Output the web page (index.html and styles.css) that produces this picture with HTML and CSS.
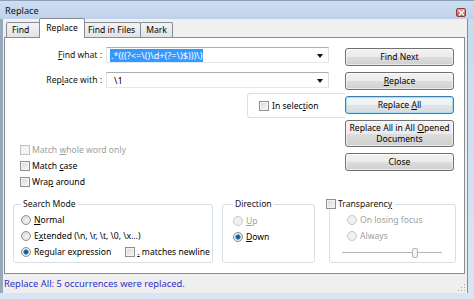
FILE: index.html
```html
<!DOCTYPE html>
<html lang="en">
<head>
  <meta charset="UTF-8" />
  <title>Replace</title>
  <link rel="stylesheet" href="styles.css">
</head>
<body>
  <div class="window">
    <div class="titlebar">
      <span class="title">Replace</span>
      <span class="close">
        <svg width="7" height="6" viewBox="0 0 7 6"><path d="M1 0.5 L6 5.5 M6 0.5 L1 5.5" stroke="#fff" stroke-width="1.4"/></svg>
      </span>
    </div>

    <div class="client">
      <div class="tabs">
        <div class="tab first">Find</div>
        <div class="tab active">Replace</div>
        <div class="tab">Find in Files</div>
        <div class="tab">Mark</div>
      </div>

      <div class="panel">
        <div class="top">
          <div class="form">
            <div class="field">
              <label><u>F</u>ind what :</label>
              <div class="combo"><span class="sel">.*(((?&lt;=\()\d+(?=\)$)))\)</span><span class="arrow"></span></div>
            </div>
            <div class="field">
              <label>Rep<u>l</u>ace with :</label>
              <div class="combo"><span class="val">\1</span><span class="arrow"></span></div>
            </div>
            <div class="insel">
              <span class="cb"></span><span>In selec<u>t</u>ion</span>
            </div>
            <div class="checks">
              <div class="row disabled"><span class="cb"></span><span>Match <u>w</u>hole word only</span></div>
              <div class="row"><span class="cb"></span><span>Match <u>c</u>ase</span></div>
              <div class="row"><span class="cb"></span><span>Wra<u>p</u> around</span></div>
            </div>
          </div>

          <div class="buttons">
            <div class="btn"><span>Find Next</span></div>
            <div class="btn"><span><u>R</u>eplace</span></div>
            <div class="btn focused"><span>Replace <u>A</u>ll</span></div>
            <div class="btn tall"><span>Replace All in All <u>O</u>pened<br>Documents</span></div>
            <div class="btn"><span>Close</span></div>
          </div>
        </div>

        <div class="groups">
          <fieldset class="group search">
            <legend>Search Mode</legend>
            <div class="row"><span class="radio"></span><span><u>N</u>ormal</span></div>
            <div class="row"><span class="radio"></span><span>E<u>x</u>tended (\n, \r, \t, \0, \x...)</span></div>
            <div class="row">
              <span class="radio on"></span><span>Regular expression</span>
              <span class="cb newline"></span><span><u>.</u> matches newline</span>
            </div>
          </fieldset>

          <fieldset class="group direction">
            <legend>Direction</legend>
            <div class="row disabled"><span class="radio"></span><span><u>U</u>p</span></div>
            <div class="row"><span class="radio on"></span><span><u>D</u>own</span></div>
          </fieldset>

          <fieldset class="group transparency">
            <legend><span class="cb"></span><span>Transparenc<u>y</u></span></legend>
            <div class="row disabled"><span class="radio"></span><span>On losing focus</span></div>
            <div class="row disabled"><span class="radio"></span><span>Always</span></div>
            <div class="slider"><span class="thumb"></span></div>
          </fieldset>
        </div>
      </div>

      <div class="status">
        <span>Replace All: 5 occurrences were replaced.</span>
        <svg class="grip" width="8" height="8" viewBox="0 0 8 8">
          <rect x="6" y="0" width="1" height="1" fill="#a8a8a8"/>
          <rect x="3" y="3" width="1" height="1" fill="#a8a8a8"/>
          <rect x="6" y="3" width="1" height="1" fill="#a8a8a8"/>
          <rect x="0" y="6" width="1" height="1" fill="#a8a8a8"/>
          <rect x="3" y="6" width="1" height="1" fill="#a8a8a8"/>
          <rect x="6" y="6" width="1" height="1" fill="#a8a8a8"/>
        </svg>
      </div>
    </div>
  </div>
</body>
</html>
```

FILE: styles.css
```css
body {
  margin: 0;
  font-family: "Noto Sans", "Open Sans", sans-serif;
  font-size: 8.6px;
  color: #000;
}
u {
  text-decoration: underline;
  text-underline-offset: 1px;
}
.window {
  width: 474px;
  height: 299px;
  display: flex;
  flex-direction: column;
  background: linear-gradient(#c9daee, #d8e5f3);
  overflow: hidden;
}
.titlebar {
  height: 19px;
  flex: none;
  display: flex;
  align-items: center;
  justify-content: space-between;
  padding: 0 8px 0 5px;
  border-top: 1px solid #8aa0b8;
  box-sizing: border-box;
  background: linear-gradient(#cfdff1, #bdd2ea);
}
.title {
  font-size: 9.2px;
  color: #111;
}
.close {
  width: 10px;
  height: 9px;
  box-sizing: border-box;
  margin-top: 5px;
  border: 1px solid #8a3b3b;
  border-radius: 2px;
  background: linear-gradient(#e6a8a0, #c55a4e);
  display: flex;
  align-items: center;
  justify-content: center;
}
.client {
  flex: 1;
  margin: 0 6px 6px 0;
  border-left: 3px solid #97a8ba;
  border-right: 1px solid #4b9be0;
  background: #f0f0f0;
  display: flex;
  flex-direction: column;
}
.tabs {
  height: 18px;
  display: flex;
  align-items: flex-end;
  padding-left: 3px;
  position: relative;
  z-index: 1;
}
.tab {
  height: 15px;
  padding: 0 5px;
  margin-left: -1px;
  border: 1px solid #898c95;
  border-bottom: none;
  border-radius: 2px 2px 0 0;
  background: linear-gradient(#f3f3f3, #e3e3e3);
  display: flex;
  align-items: center;
  box-sizing: border-box;
}
.tab.first {
  width: 35px;
  margin-left: 0;
}
.tab.active {
  width: 46px;
  margin: 0 -2px -1px -2px;
  height: 20px;
  padding-bottom: 2px;
  background: #fff;
  justify-content: center;
  position: relative;
  z-index: 2;
}
.panel {
  margin: 0 2px 0 1px;
  height: 237px;
  box-sizing: border-box;
  border: 1px solid #898c95;
  background: #fff;
  display: flex;
  flex-direction: column;
}
.top {
  display: flex;
}
.form {
  width: 335px;
}
.field {
  display: flex;
  align-items: center;
  height: 16px;
  margin-top: 9px;
}
.field label {
  width: 101px;
  text-align: right;
  padding-right: 4px;
  box-sizing: border-box;
  color: #111;
}
.combo {
  width: 223px;
  height: 16px;
  box-sizing: border-box;
  border: 1px solid #abadb3;
  border-color: #abadb3 #dbdfe6 #e3e9ef #e2e3ea;
  display: flex;
  align-items: center;
  padding-left: 3px;
  position: relative;
  font-size: 9.2px;
}
.sel {
  background: #3399ff;
  color: #fff;
  padding: 0 1px;
  line-height: 13px;
}
.val {
  padding-left: 4px;
}
.arrow {
  position: absolute;
  right: 5px;
  top: 6px;
  border-top: 4px solid #111;
  border-left: 3px solid transparent;
  border-right: 3px solid transparent;
}
.insel {
  margin: 5px 0 0 242px;
  width: 98px;
  height: 25px;
  box-sizing: border-box;
  border: 1px solid #dcdfe3;
  border-right: none;
  border-radius: 3px 0 0 3px;
  display: flex;
  align-items: center;
  padding-left: 11px;
  gap: 3px;
}
.cb {
  width: 10px;
  height: 10px;
  box-sizing: border-box;
  border: 1px solid #8e8f8f;
  background: linear-gradient(135deg, #d8d8d8, #f7f7f7);
  box-shadow: inset 0 0 0 1px #f4f4f4;
  flex: none;
}
.checks {
  margin-top: 24px;
  padding-left: 15px;
}
.row {
  height: 16px;
  display: flex;
  align-items: center;
  gap: 2px;
}
.disabled {
  color: #a0a0a0;
}
.disabled .cb {
  border-color: #c2c2c2;
  background: #f4f4f4;
}
.buttons {
  margin: 10px 0 0 5px;
  width: 109px;
  display: flex;
  flex-direction: column;
  gap: 6px;
}
.btn {
  height: 18px;
  box-sizing: border-box;
  border: 1px solid #707070;
  border-radius: 3px;
  background: linear-gradient(#f2f2f2 0%, #ebebeb 50%, #dddddd 51%, #cfcfcf 100%);
  box-shadow: inset 0 0 0 1px rgba(255, 255, 255, 0.6);
  display: flex;
  align-items: center;
  justify-content: center;
  text-align: center;
  line-height: 11px;
}
.btn.tall {
  height: 27px;
}
.btn.focused {
  border-color: #3c7fb1;
  box-shadow: inset 0 0 0 1px #a6dcf6;
  background: linear-gradient(#f4f7f9 0%, #eef1f3 50%, #e1e5e8 51%, #d7dbde 100%);
}
.groups {
  display: flex;
  align-items: flex-start;
  margin-top: 8px;
  padding-left: 8px;
}
.group {
  margin: 0;
  padding: 0 0 0 7px;
  border: 1px solid #d5dfe5;
  border-radius: 3px;
  box-sizing: border-box;
  height: 65px;
  min-width: 0;
}
.group legend {
  padding: 0 2px;
  line-height: 12px;
  color: #111;
}
.group .row {
  gap: 3px;
}
.search {
  width: 200px;
}
.search .row:first-of-type {
  margin-top: 2px;
}
.cb.newline {
  margin-left: 11px;
  margin-right: -1px;
}
.direction {
  width: 93px;
  margin-left: 9px;
  padding-left: 10px;
}
.direction .row:first-of-type {
  margin-top: 3px;
}
.transparency {
  width: 127px;
  margin-left: 14px;
  padding-left: 17px;
}
.transparency legend {
  display: flex;
  align-items: center;
  gap: 2px;
  padding: 0 3px 0 0;
  margin-left: -21px;
  background: #fff;
}
.transparency .row:first-of-type {
  margin-top: 2px;
}
.radio {
  width: 10px;
  height: 10px;
  box-sizing: border-box;
  border-radius: 50%;
  border: 1px solid #8e8f8f;
  background: radial-gradient(circle at 60% 65%, #f4f4f4, #d2d2d2);
  flex: none;
}
.radio.on {
  background: radial-gradient(circle, #0e3e6e 0, #2b79c2 2.2px, #e7eef5 3px, #dadada 100%);
}
.disabled .radio {
  border-color: #c8c8c8;
  background: #f0f0f0;
}
.slider {
  margin: 8px 0 0 -5px;
  width: 100px;
  height: 2px;
  border-top: 1px solid #b5b5b5;
  border-bottom: 1px solid #fff;
  box-sizing: border-box;
  position: relative;
}
.thumb {
  position: absolute;
  left: 70px;
  top: -5px;
  width: 4px;
  height: 8px;
  border: 1px solid #b5b5b5;
  border-radius: 2px;
  background: #f4f4f4;
}
.status {
  flex: 1;
  display: flex;
  align-items: center;
  justify-content: space-between;
  padding: 0 1px;
  color: #2f2fc7;
  font-size: 9.4px;
  background: #efefef;
}
.grip {
  align-self: flex-end;
  margin-bottom: 1px;
}
```
